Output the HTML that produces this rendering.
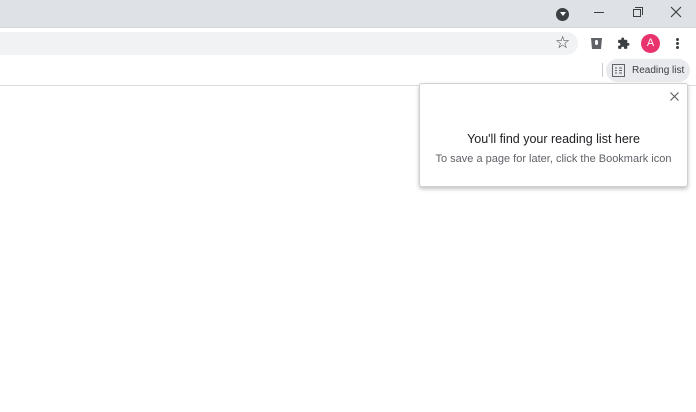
<!DOCTYPE html>
<html><head><style>
*{margin:0;padding:0;box-sizing:border-box}
body{width:696px;height:412px;overflow:hidden;background:#fff;font-family:"Liberation Sans",Arial,sans-serif;position:relative}
.abs{position:absolute}
</style></head><body>
<div class="abs" style="left:0;top:0;width:696px;height:28px;background:#dee1e6;border-bottom:1px solid #d3d6db"></div>
<div class="abs" style="left:556px;top:8px;width:13px;height:13px;border-radius:50%;background:#3c4043"></div>
<div class="abs" style="left:560px;top:12px;width:0;height:0;border-left:3px solid transparent;border-right:3px solid transparent;border-top:4px solid #fff"></div>
<div class="abs" style="left:594px;top:12px;width:10px;height:1px;background:#3c4043"></div>
<div class="abs" style="left:633px;top:9px;width:8px;height:8px;border:1px solid #3c4043;background:#dee1e6"></div>
<div class="abs" style="left:635px;top:7px;width:8px;height:8px;border-top:1px solid #3c4043;border-right:1px solid #3c4043"></div>
<svg class="abs" style="left:670px;top:6px" width="12" height="12"><path d="M1 1L11 11M11 1L1 11" stroke="#3c4043" stroke-width="1.2"/></svg>
<div class="abs" style="left:-20px;top:32px;width:598px;height:23px;border-radius:12px;background:#f0f2f4"></div>
<div class="abs" style="left:555px;top:33px;font-size:17px;color:#3c4043">☆</div>
<svg class="abs" style="left:590px;top:37px" width="13" height="13"><path d="M1 1H12L11 12H2Z" fill="#5f6368"/><rect x="5" y="3" width="3" height="5" rx="1.5" fill="#fff"/></svg>
<svg class="abs" style="left:617px;top:37px" width="13" height="13" viewBox="0 0 24 24"><path d="M20.5 11H19V7c0-1.1-.9-2-2-2h-4V3.5a2.5 2.5 0 0 0-5 0V5H4c-1.1 0-2 .9-2 2v3.8h1.5c1.5 0 2.7 1.2 2.7 2.7S5 16.2 3.5 16.2H2V20c0 1.1.9 2 2 2h3.8v-1.5c0-1.5 1.2-2.7 2.7-2.7s2.7 1.2 2.7 2.7V22H17c1.1 0 2-.9 2-2v-4h1.5a2.5 2.5 0 0 0 0-5z" fill="#3c4043"/></svg>
<div class="abs" style="left:641px;top:34px;width:19px;height:19px;border-radius:50%;background:#e8336d;color:#fff;font-size:11px;text-align:center;line-height:19px">A</div>
<div class="abs" style="left:676px;top:38px;width:3px;height:3px;border-radius:50%;background:#3c4043;box-shadow:0 4px 0 #3c4043,0 8px 0 #3c4043"></div>
<div class="abs" style="left:602px;top:63px;width:1px;height:14px;background:#c8cacd"></div>
<div class="abs" style="left:606px;top:59px;width:84px;height:23px;border-radius:12px;background:#e8eaed"></div>
<svg class="abs" style="left:612px;top:64px" width="13" height="13"><rect x="0.5" y="0.5" width="12" height="12" fill="none" stroke="#5f6368"/><path d="M3 4H5M3 6.5H5M3 9H5M7 4H10M7 6.5H10M7 9H10" stroke="#5f6368"/></svg>
<div class="abs" style="left:632px;top:65px;font-size:10px;color:#3c4043">Reading list</div>
<div class="abs" style="left:0;top:85px;width:696px;height:1px;background:#dadce0"></div>
<div class="abs" style="left:419px;top:83px;width:269px;height:104px;background:#fff;border:1px solid #d0d0d0;border-radius:3px;box-shadow:0 2px 4px rgba(0,0,0,.25)"></div>
<svg class="abs" style="left:670px;top:92px" width="9" height="9"><path d="M0.5 0.5L8.5 8.5M8.5 0.5L0.5 8.5" stroke="#5f6368" stroke-width="1.2"/></svg>
<div class="abs" style="left:419px;top:132px;width:269px;text-align:center;font-size:12.5px;color:#202124">You'll find your reading list here</div>
<div class="abs" style="left:419px;top:153px;width:269px;text-align:center;font-size:11px;color:#5f6368">To save a page for later, click the Bookmark icon</div>
</body></html>
